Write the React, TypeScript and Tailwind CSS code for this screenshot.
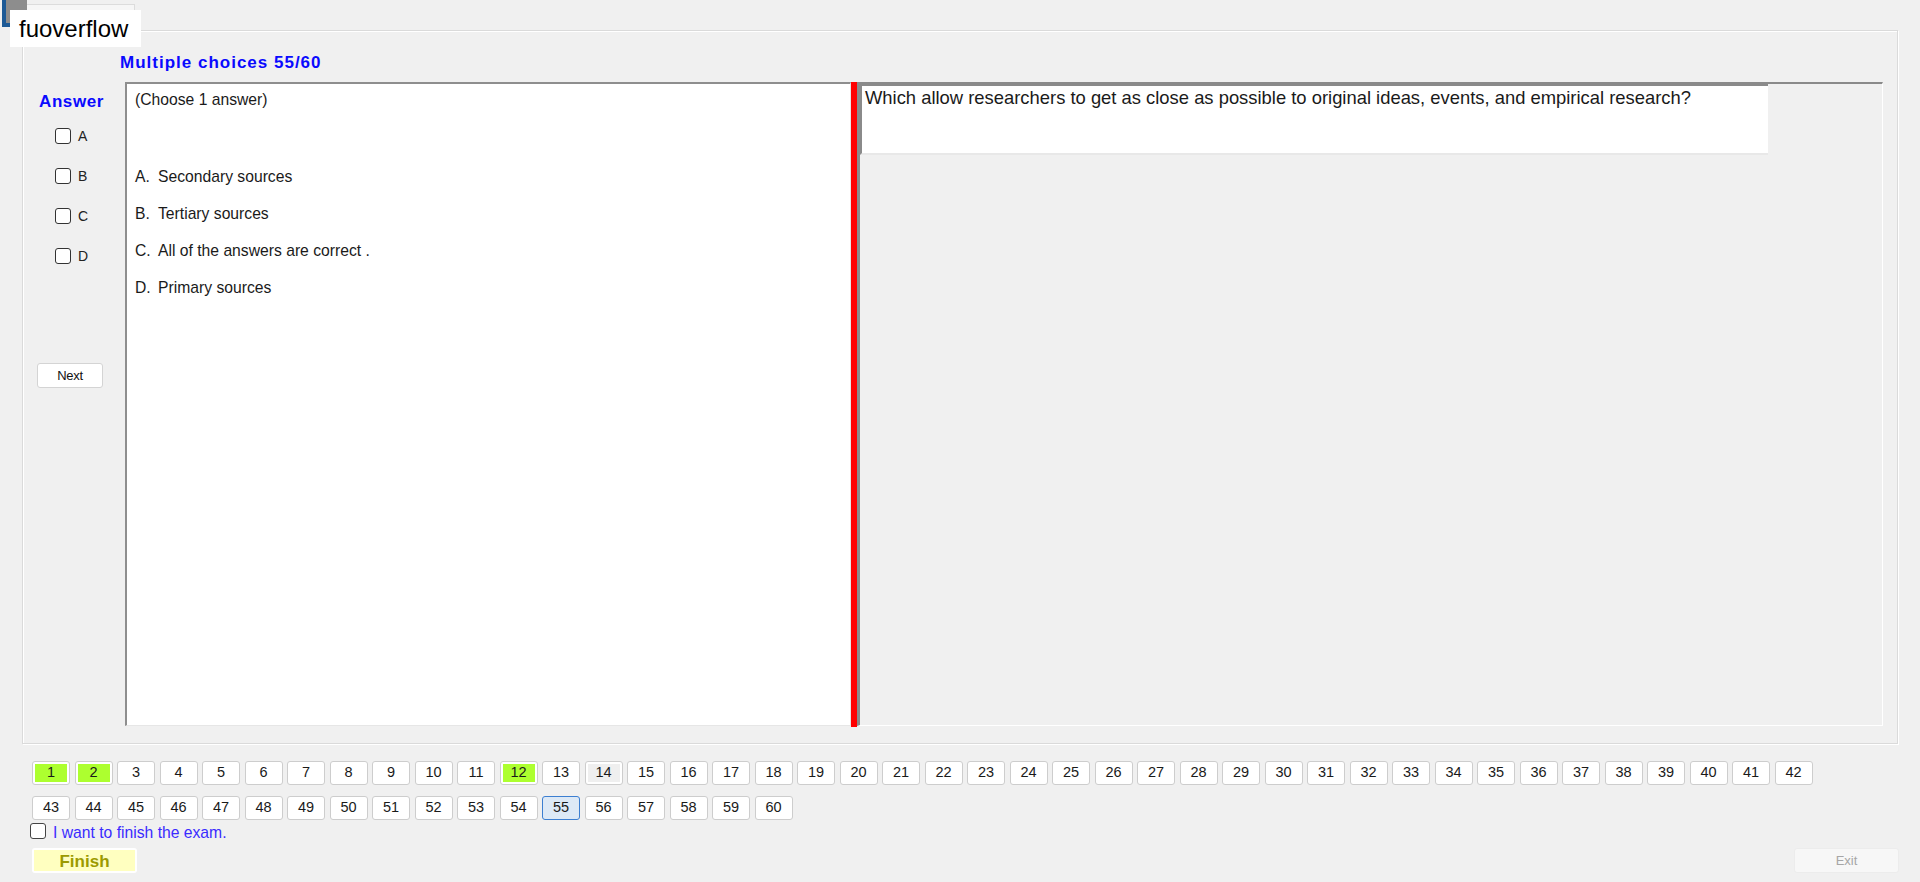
import React from "react";

const row1 = Array.from({ length: 42 }, (_, i) => i + 1);
const row2 = Array.from({ length: 18 }, (_, i) => i + 43);
const answered = [1, 2, 12];

const options = [
  { key: "A", text: "Secondary sources" },
  { key: "B", text: "Tertiary sources" },
  { key: "C", text: "All of the answers are correct ." },
  { key: "D", text: "Primary sources" },
];

const Box: React.FC<{ className?: string }> = ({ className = "" }) => (
  <span
    className={`inline-block w-[16px] h-[16px] rounded-[3px] border-[1.5px] border-[#333] bg-white ${className}`}
  />
);

const NumButton: React.FC<{ n: number }> = ({ n }) => {
  // current question / answered / visited
  if (n === 55) {
    return (
      <div className="w-[38px] h-[24px] rounded-[3px] border border-[#3d7fd1] bg-[#dde9f6] flex items-center justify-center text-[14.5px] text-[#1a1a1a]">
        {n}
      </div>
    );
  }
  const fill = answered.includes(n)
    ? "bg-[#adff2f]"
    : n === 14
    ? "bg-[#efefef]"
    : "bg-white";
  return (
    <div className="w-[38px] h-[24px] rounded-[3px] border border-[#cdcdcd] bg-white p-[2px]">
      <div
        className={`w-full h-full flex items-center justify-center text-[14.5px] text-[#1a1a1a] ${fill}`}
      >
        {n}
      </div>
    </div>
  );
};

const App: React.FC = () => {
  return (
    <div className="relative w-[1920px] h-[882px] bg-[#f0f0f0] overflow-hidden font-['Liberation_Sans',Arial,sans-serif]">
      {/* window icon + title label (over content) */}
      <div className="absolute left-[2px] top-0 w-[25px] h-[27px] bg-[#8d8d8d] border-l-[4px] border-b-[4px] border-[#1d5a96]" />
      <div className="absolute left-[27px] top-[4px] w-[108px] h-[27px] bg-[#f6f6f6] border-t border-r border-[#dcdcdc]" />
      <div className="absolute left-[10px] top-[10px] w-[131px] h-[37px] bg-white pl-[9px] text-[24px] leading-[37px] text-black z-10">
        fuoverflow
      </div>

      {/* group box */}
      <div className="pt-[30px] pl-[22px]">
        <div className="w-[1876px] h-[714px] border border-[#dadada] shadow-[inset_1px_1px_0_#ffffff,1px_1px_0_#ffffff]">
          <div className="h-[51px] pt-[22px] pl-[97px] leading-[20px] text-[17px] font-bold tracking-[1px] text-[#0a0aff]">
            Multiple choices 55/60
          </div>

          <div className="flex h-[644px]">
            {/* answer column */}
            <div className="w-[102px] pt-[10px]">
              <div className="pl-[16px] leading-[20px] text-[17px] font-bold tracking-[0.6px] text-[#0a0aff]">
                Answer
              </div>
              <div className="mt-[16px] flex flex-col gap-[24px] pl-[32px]">
                {options.map((o) => (
                  <label key={o.key} className="flex items-center h-[16px] gap-[7px] text-[14px] text-[#222]">
                    <Box />
                    <span>{o.key}</span>
                  </label>
                ))}
              </div>
              <button className="mt-[99px] ml-[14px] w-[66px] h-[25px] rounded-[3px] bg-white border border-[#d4d4d4] text-[13px] text-[#111] tracking-[-0.3px]">
                Next
              </button>
            </div>

            {/* options panel */}
            <div className="w-[726px] h-full bg-white border-t-2 border-l-2 border-t-[#8e8e8e] border-l-[#8e8e8e] border-r border-b border-r-[#e6e6e6] border-b-[#e6e6e6] pl-[8px] pt-[6px] text-[15.7px] text-[#1a1a1a]">
              <div className="leading-[20px]">(Choose 1 answer)</div>
              <div className="mt-[57px] flex flex-col gap-[17px]">
                {options.map((o) => (
                  <div key={o.key} className="leading-[20px]">
                    <span className="inline-block w-[23px]">{o.key}.</span>
                    {o.text}
                  </div>
                ))}
              </div>
            </div>

            {/* splitter */}
            <div className="w-[6px] h-[645px] bg-[#ff0000]" />

            {/* question panel */}
            <div className="w-[1026px] h-full border-t-2 border-l-[3px] border-t-[#8a8a8a] border-l-[#8a8a8a] border-r border-b border-r-white border-b-white">
              <div className="w-[908px] h-[71px] bg-white border-t-2 border-l-2 border-t-[#8a8a8a] border-l-[#8a8a8a] border-b-2 border-b-[#e8e8e8] pl-[3px] pt-[1px] leading-[22px] text-[18.4px] text-[#1a1a1a]">
                Which allow researchers to get as close as possible to original ideas, events, and empirical research?
              </div>
            </div>
          </div>
        </div>
      </div>

      {/* question navigator */}
      <div className="pl-[32px] pt-[17px]">
        <div className="flex gap-[4.5px]">
          {row1.map((n) => (
            <NumButton key={n} n={n} />
          ))}
        </div>
        <div className="mt-[11px] flex gap-[4.5px]">
          {row2.map((n) => (
            <NumButton key={n} n={n} />
          ))}
        </div>
      </div>

      <label className="mt-[3px] ml-[30px] flex items-center h-[16px] gap-[7px] text-[15.7px] text-[#3a2bff]">
        <Box className="border-[#444]" />
        <span className="pt-[3px]">I want to finish the exam.</span>
      </label>

      <div className="mt-[9px] pl-[32px] pr-[21px] flex justify-between">
        <button className="w-[105px] h-[25px] rounded-[3px] bg-white p-[2px]">
          <div className="w-full h-full bg-[#ffffc0] flex items-center justify-center pt-[2px] text-[17px] font-bold text-[#9c9a00]">
            Finish
          </div>
        </button>
        <button className="w-[105px] h-[25px] rounded-[3px] bg-[#f7f7f7] border border-[#ececec] text-[13px] text-[#a6a6a6]">
          Exit
        </button>
      </div>
    </div>
  );
};

export default App;
